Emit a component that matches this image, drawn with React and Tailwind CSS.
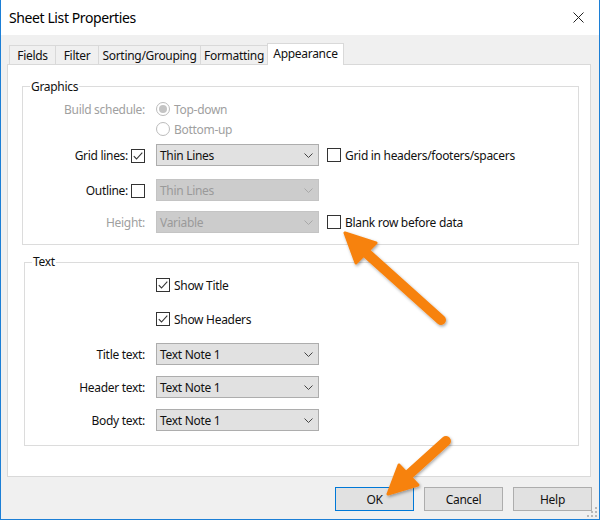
import React from "react";

function Chevron({ disabled }) {
  return (
    <svg width="9" height="5" viewBox="0 0 9 5">
      <path
        d="M0.5 0.5 L4.5 4.5 L8.5 0.5"
        fill="none"
        stroke={disabled ? "#a8a8a8" : "#444"}
        strokeWidth="1"
      />
    </svg>
  );
}

function Dropdown({ value, disabled }) {
  return (
    <div
      className={`flex h-[22px] w-[163px] items-center justify-between border pl-[3px] pr-[5px] ${
        disabled
          ? "border-[#c4c4c4] bg-[#cccccc] text-[#9a9a9a]"
          : "border-[#adadad] bg-[#e1e1e1] text-[#111]"
      }`}
    >
      <span className="pt-px">{value}</span>
      <Chevron disabled={disabled} />
    </div>
  );
}

function Checkbox({ checked }) {
  return (
    <span className="flex h-[14px] w-[14px] shrink-0 items-center justify-center border border-[#333] bg-white">
      {checked && (
        <svg width="12" height="12" viewBox="0 0 12 12">
          <path d="M1.8 6.2 L4.5 9 L10.3 2.6" fill="none" stroke="#333" strokeWidth="1.1" />
        </svg>
      )}
    </span>
  );
}

function Radio({ checked }) {
  return (
    <span className="flex h-[14px] w-[14px] shrink-0 items-center justify-center rounded-full border border-[#bcbcbc] bg-white">
      {checked && <span className="h-[8px] w-[8px] rounded-full bg-[#c4c4c4]" />}
    </span>
  );
}

// one row of a group box: right aligned label column, then the control
function Row({ label, labelWidth, muted, className, children, extra }) {
  return (
    <div className={`flex items-center ${className}`}>
      <div
        className={`flex items-center justify-end pt-px ${labelWidth} ${muted ? "text-[#a0a0a0]" : ""}`}
      >
        {label}
      </div>
      <div className="ml-[11px] flex items-center">{children}</div>
      {extra}
    </div>
  );
}

function Tab({ label, width, active }) {
  if (active) {
    return (
      <div
        className={`relative z-10 -mb-px flex h-[22px] items-start justify-center border border-b-0 border-[#d9d9d9] bg-white pt-[2px] ${width}`}
      >
        {label}
      </div>
    );
  }
  return (
    <div
      className={`-mr-px flex h-[19px] items-center justify-center border border-b-0 border-[#d9d9d9] bg-[#f0f0f0] pt-px ${width}`}
    >
      {label}
    </div>
  );
}

export default function App() {
  return (
    <div className="relative h-[520px] w-[600px] font-['Segoe_UI','Noto_Sans',sans-serif] text-[12px] leading-[16px] tracking-[-0.3px] text-[#111]">
      <div className="flex h-full w-full flex-col border-x border-b border-[#1c7fd6] bg-[#f0f0f0]">
        {/* title bar */}
        <div className="flex h-[35px] shrink-0 items-center justify-between bg-white pl-[8px] pr-[15px]">
          <span className="text-[14px] tracking-[-0.4px] text-black">Sheet List Properties</span>
          <svg width="11" height="11" viewBox="0 0 11 11">
            <path d="M0.5 0.5 L10.5 10.5 M10.5 0.5 L0.5 10.5" stroke="#222" strokeWidth="1" />
          </svg>
        </div>

        <div className="flex flex-1 flex-col pl-[6px]">
          {/* tabs */}
          <div className="flex h-[29px] items-end pl-[2px]">
            <Tab label="Fields" width="w-[47px]" />
            <Tab label="Filter" width="w-[44px]" />
            <Tab label="Sorting/Grouping" width="w-[103px]" />
            <Tab label="Formatting" width="w-[68px]" />
            <Tab label="Appearance" width="w-[77px]" active />
          </div>

          {/* tab page */}
          <div className="flex h-[413px] w-[584px] flex-col border border-[#d9d9d9] bg-white">
            {/* Graphics */}
            <div className="relative ml-[14px] mt-[21px] h-[159px] w-[557px] border border-[#dcdcdc]">
              <span className="absolute -top-[8px] left-[7px] bg-white px-[1px]">Graphics</span>
              <Row label="Build schedule:" labelWidth="w-[122px]" muted className="mt-[12px] h-[20px]">
                <Radio checked />
                <span className="ml-[4px] pt-px text-[#a0a0a0]">Top-down</span>
              </Row>
              <Row label="" labelWidth="w-[122px]" className="h-[20px]">
                <Radio />
                <span className="ml-[4px] pt-px text-[#a0a0a0]">Bottom-up</span>
              </Row>
              <Row
                label={
                  <>
                    <span>Grid lines:</span>
                    <span className="ml-[3px]">
                      <Checkbox checked />
                    </span>
                  </>
                }
                labelWidth="w-[122px]"
                className="mt-[5px]"
                extra={
                  <div className="ml-[8px] flex items-center gap-[4px]">
                    <Checkbox />
                    <span className="pt-px">Grid in headers/footers/spacers</span>
                  </div>
                }
              >
                <Dropdown value="Thin Lines" />
              </Row>
              <Row
                label={
                  <>
                    <span>Outline:</span>
                    <span className="ml-[3px]">
                      <Checkbox />
                    </span>
                  </>
                }
                labelWidth="w-[122px]"
                className="mt-[13px]"
              >
                <Dropdown value="Thin Lines" disabled />
              </Row>
              <Row
                label="Height:"
                labelWidth="w-[122px]"
                muted
                className="mt-[10px]"
                extra={
                  <div className="ml-[8px] flex items-center gap-[4px]">
                    <Checkbox />
                    <span className="pt-px">Blank row before data</span>
                  </div>
                }
              >
                <Dropdown value="Variable" disabled />
              </Row>
            </div>

            {/* Text */}
            <div className="relative ml-[16px] mt-[17px] h-[184px] w-[555px] border border-[#dcdcdc]">
              <span className="absolute -top-[9px] left-[7px] bg-white px-[1px]">Text</span>
              <Row label="" labelWidth="w-[120px]" className="mt-[12px] h-[20px]">
                <Checkbox checked />
                <span className="ml-[4px] pt-px">Show Title</span>
              </Row>
              <Row label="" labelWidth="w-[120px]" className="mt-[14px] h-[20px]">
                <Checkbox checked />
                <span className="ml-[4px] pt-px">Show Headers</span>
              </Row>
              <Row label="Title text:" labelWidth="w-[120px]" className="mt-[14px]">
                <Dropdown value="Text Note 1" />
              </Row>
              <Row label="Header text:" labelWidth="w-[120px]" className="mt-[11px]">
                <Dropdown value="Text Note 1" />
              </Row>
              <Row label="Body text:" labelWidth="w-[120px]" className="mt-[11px]">
                <Dropdown value="Text Note 1" />
              </Row>
            </div>
          </div>

          {/* buttons */}
          <div className="mt-[10px] flex justify-end gap-[10px] pr-[7px]">
            <button className="h-[24px] w-[79px] border border-[#0078d7] bg-[#e1e1e1] pt-px">OK</button>
            <button className="h-[24px] w-[79px] border border-[#adadad] bg-[#e1e1e1] pt-px">Cancel</button>
            <button className="h-[24px] w-[79px] border border-[#adadad] bg-[#e1e1e1] pt-px">Help</button>
          </div>
        </div>
      </div>

      {/* size grip */}
      <svg className="absolute bottom-[3px] right-[3px]" width="10" height="10" viewBox="0 0 10 10">
        <g fill="#b8b8b8">
          <rect x="8" y="0" width="2" height="2" />
          <rect x="4" y="4" width="2" height="2" />
          <rect x="8" y="4" width="2" height="2" />
          <rect x="0" y="8" width="2" height="2" />
          <rect x="4" y="8" width="2" height="2" />
          <rect x="8" y="8" width="2" height="2" />
        </g>
      </svg>

      {/* callout arrows */}
      <svg className="pointer-events-none absolute left-0 top-0" width="600" height="520">
        <defs>
          <filter id="sh" x="-20%" y="-20%" width="140%" height="140%">
            <feDropShadow dx="1" dy="1.5" stdDeviation="1.5" floodColor="#000" floodOpacity="0.35" />
          </filter>
        </defs>
        <g filter="url(#sh)" fill="#f7820f" stroke="#f7820f">
          <line x1="441" y1="320" x2="363" y2="250" strokeWidth="10" strokeLinecap="round" />
          <polygon points="345,233 376,243 356,263" strokeWidth="3" strokeLinejoin="round" />
          <line x1="446" y1="441" x2="405" y2="478" strokeWidth="10" strokeLinecap="round" />
          <polygon points="388,494 399,465 418,485" strokeWidth="3" strokeLinejoin="round" />
        </g>
      </svg>
    </div>
  );
}
